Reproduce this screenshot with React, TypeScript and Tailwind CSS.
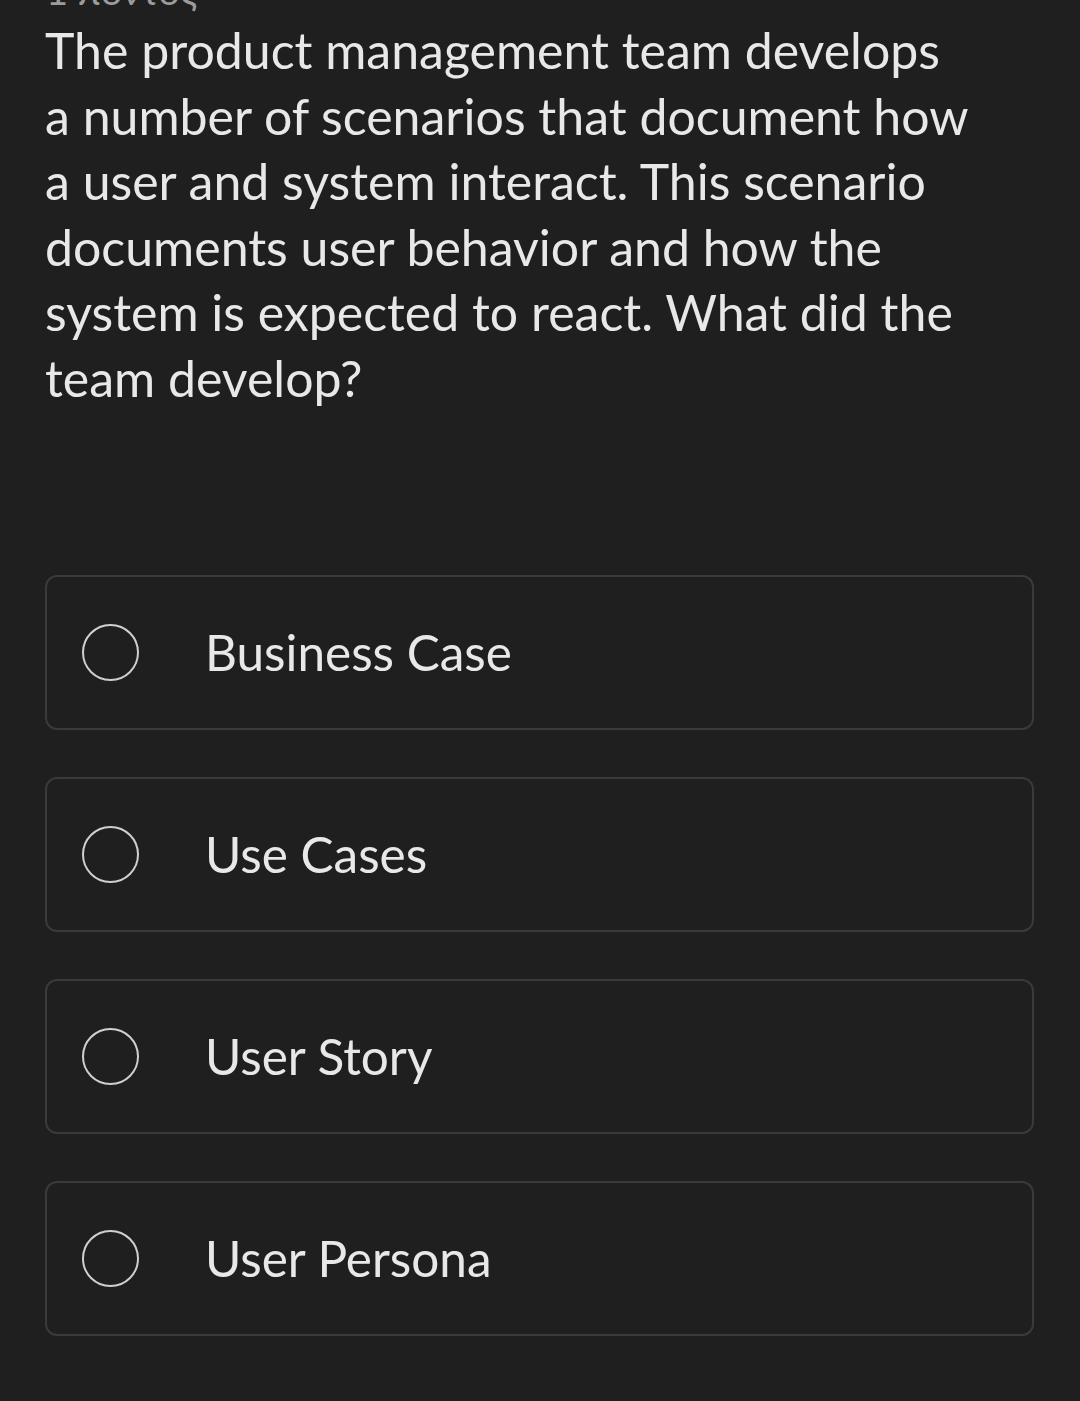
import React from 'react';

const questionLines = [
  'The product management team develops',
  'a number of scenarios that document how',
  'a user and system interact. This scenario',
  'documents user behavior and how the',
  'system is expected to react. What did the',
  'team develop?',
];

const options = ['Business Case', 'Use Cases', 'User Story', 'User Persona'];

function Option({ label }: { label: string }) {
  return (
    <label className="flex h-[155px] cursor-pointer items-center rounded-[12px] border-2 border-[#3a3a3a] bg-[#1f1f1f] pl-[35px]">
      <span className="h-[57px] w-[57px] shrink-0 rounded-full border-2 border-[#cfcfcf]" />
      <span className="ml-[66px] text-[49.5px] leading-none text-[#e8e8e8]">{label}</span>
    </label>
  );
}

export default function App() {
  return (
    <div
      className="min-h-[1401px] overflow-hidden bg-[#1f1f1f] px-[45px]"
      style={{ fontFamily: 'Lato, "Noto Sans", "Liberation Sans", sans-serif' }}
    >
      {/* points label, scrolled mostly out of view */}
      <div className="-mt-[34px] pl-[1px] text-[38px] leading-[48px] text-[#9c9c9c]">1 πόντος</div>

      <p className="mt-[4px] text-[50px] leading-[65.5px] text-[#e8e8e8]">
        {questionLines.map((line) => (
          <span key={line} className="block whitespace-nowrap">
            {line}
          </span>
        ))}
      </p>

      <div className="mt-[164px] mr-[1px] flex flex-col gap-[47px]">
        {options.map((o) => (
          <Option key={o} label={o} />
        ))}
      </div>
    </div>
  );
}
